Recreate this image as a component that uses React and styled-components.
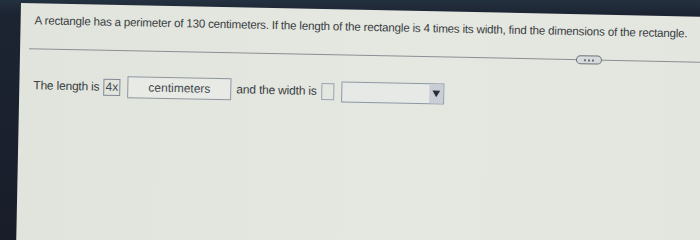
import React from "react";
import styled, { createGlobalStyle } from "styled-components";

const GlobalStyle = createGlobalStyle`
  html, body { margin: 0; padding: 0; }
  body {
    background: #1a1f2c;
    overflow: hidden;
    font-family: "Liberation Sans", Arial, sans-serif;
  }
`;

const Screen = styled.div`
  width: 700px;
  height: 240px;
  overflow: hidden;
  background: linear-gradient(180deg, #243140 0px, #1c2432 14px, #191d2a 100%);
`;

const Panel = styled.div`
  margin-left: 21px;
  margin-top: 3px;
  width: 740px;
  height: 300px;
  background: linear-gradient(90deg, #e1e4dd 0%, #e5e7e1 50%, #e3e5df 100%);
  transform: rotate(1.15deg);
  transform-origin: 0 0;
  color: #393d41;
  font-size: 12px;
`;

const Question = styled.div`
  padding: 10px 0 0 14px;
  white-space: nowrap;
  line-height: 14px;
  font-size: 11.6px;
  letter-spacing: -0.2px;
`;

const Divider = styled.div`
  position: relative;
  margin: 21px 0 0 9px;
  height: 1px;
  background: #8b8f91;
`;

const More = styled.div`
  position: absolute;
  left: 547px;
  top: -4px;
  width: 24px;
  height: 7px;
  border: 1px solid #6d7378;
  border-radius: 5px;
  background: #d6dadc;
  display: flex;
  align-items: center;
  justify-content: center;
  gap: 2px;
`;

const Dot = styled.span`
  width: 2px;
  height: 2px;
  background: #6a7075;
`;

const Row = styled.div`
  display: flex;
  align-items: center;
  padding-left: 14px;
  margin-top: 25px;
  white-space: nowrap;
`;

const Label = styled.span`
  letter-spacing: -0.2px;
  margin-right: ${(p) => p.$gap || 0}px;
`;

const Filled = styled.span`
  box-sizing: border-box;
  display: inline-flex;
  align-items: center;
  justify-content: center;
  height: ${(p) => p.$h}px;
  width: ${(p) => p.$w}px;
  border: 1px solid ${(p) => p.$border || "#9aa3aa"};
  background: ${(p) => p.$bg || "transparent"};
  margin-right: ${(p) => p.$gap || 0}px;
  color: #44494e;
  font-size: 12px;
`;

const Select = styled.span`
  box-sizing: border-box;
  display: inline-flex;
  justify-content: flex-end;
  height: 21px;
  width: 103px;
  border: 1px solid #8f99a3;
  background: #e6e9e6;
`;

const Arrow = styled.span`
  width: 14px;
  background: #c9ced6;
  display: flex;
  align-items: center;
  justify-content: center;
`;

export default function App() {
  return (
    <>
      <GlobalStyle />
      <Screen>
        <Panel>
          <Question>
            A rectangle has a perimeter of 130 centimeters. If the length of the rectangle is 4 times its width, find the dimensions of the rectangle.
          </Question>
          <Divider>
            <More>
              <Dot />
              <Dot />
              <Dot />
            </More>
          </Divider>
          <Row>
            <Label $gap={4}>The length is</Label>
            <Filled $w={17} $h={17} $border="#7f8a93" $gap={7}>4x</Filled>
            <Filled $w={104} $h={22} $border="#8d969e" $bg="#e8eae6" $gap={5}>centimeters</Filled>
            <Label $gap={5}>and the width is</Label>
            <Filled $w={13} $h={17} $border="#9aa4ae" $gap={7} />
            <Select>
              <Arrow>
                <svg width="8" height="7" viewBox="0 0 8 7">
                  <path d="M0 0 H8 L4 7 Z" fill="#2a2f36" />
                </svg>
              </Arrow>
            </Select>
          </Row>
        </Panel>
      </Screen>
    </>
  );
}
